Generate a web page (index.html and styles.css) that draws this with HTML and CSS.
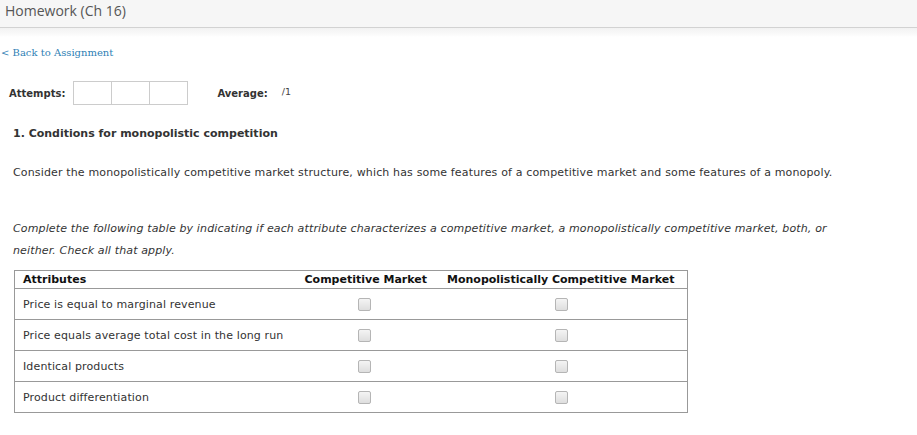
FILE: index.html
```html
<!DOCTYPE html>
<html>
<head>
<meta charset="utf-8">
<link rel="stylesheet" href="styles.css">
</head>
<body>
<header class="topbar">Homework (Ch 16)</header>
<div class="shadowband"></div>
<a class="back" href="#">&lt; Back to Assignment</a>
<div class="attempts">
  <span class="lbl">Attempts:</span>
  <span class="boxes"><span class="box"></span><span class="box"></span><span class="box"></span></span>
  <span class="lbl avg">Average:</span>
  <span class="score">/1</span>
</div>
<h2 class="qtitle">1. Conditions for monopolistic competition</h2>
<p class="intro">Consider the monopolistically competitive market structure, which has some features of a competitive market and some features of a monopoly.</p>
<p class="instr">Complete the following table by indicating if each attribute characterizes a competitive market, a monopolistically competitive market, both, or neither. Check all that apply.</p>
<table class="grid">
  <thead>
    <tr><th class="attr">Attributes</th><th class="c1">Competitive Market</th><th class="c2">Monopolistically Competitive Market</th></tr>
  </thead>
  <tbody>
    <tr><td>Price is equal to marginal revenue</td><td class="cb"><span class="chk"></span></td><td class="cb"><span class="chk"></span></td></tr>
    <tr><td>Price equals average total cost in the long run</td><td class="cb"><span class="chk"></span></td><td class="cb"><span class="chk"></span></td></tr>
    <tr><td>Identical products</td><td class="cb"><span class="chk"></span></td><td class="cb"><span class="chk"></span></td></tr>
    <tr><td>Product differentiation</td><td class="cb"><span class="chk"></span></td><td class="cb"><span class="chk"></span></td></tr>
  </tbody>
</table>
</body>
</html>
```
FILE: styles.css
```css
html, body { margin: 0; padding: 0; background: #fff; }
body { font-family: "DejaVu Sans", Verdana, sans-serif; font-size: 11px; color: #333; }
.topbar {
  height: 28px; box-sizing: border-box; background: #f6f6f6;
  border-bottom: 1px solid #d2d2d2;
  font-family: "Open Sans", sans-serif; font-size: 14px; color: #555;
  padding: 1px 0 0 5px; line-height: 20px;
}
.shadowband { height: 9px; background: linear-gradient(#f2f2f2, #fafafa 70%, #fff); }
.back {
  display: block; margin: 9px 0 0 1px; font-family: "DejaVu Serif", serif; font-size: 10px;
  color: #2f7fb5; text-decoration: none; line-height: 14px;
}
.attempts { display: flex; align-items: center; margin: 21px 0 0 9px; height: 24px; font-size: 10px; }
.lbl { font-weight: bold; color: #333; }
.boxes { display: flex; margin-left: 8px; }
.box { width: 37px; height: 22px; border: 1px solid #ccc; }
.box + .box { margin-left: -1px; }
.avg { margin-left: 29px; }
.score { margin-left: 14px; font-size: 9.5px; color: #444; margin-top: -3px; }
.qtitle { margin: 22px 0 0 13px; font-size: 11px; font-weight: bold; color: #333; line-height: 14px; }
.intro { margin: 25px 0 0 13px; line-height: 14px; letter-spacing: 0.15px; }
.instr { margin: 38px 0 0 13px; font-style: italic; line-height: 22px; width: 850px; letter-spacing: 0.14px; }
.grid { margin: 8px 0 0 14px; border-collapse: collapse; border: 1px solid #999; width: 674px; }
.grid th { font-weight: bold; color: #111; text-align: left; height: 17px; padding: 0 0 0 8px; border-bottom: 1px solid #999; }
.grid th.c1 { width: 134px; text-align: right; padding: 0 8px 0 0; }
.grid th.c2 { width: 230px; padding: 0 10px 0 12px; text-align: left; }
.grid td { height: 30px; padding: 0 0 0 8px; border-bottom: 1px solid #999; color: #333; letter-spacing: 0.13px; }
.grid td.cb { text-align: center; padding: 0; }
.chk {
  display: inline-block; width: 11px; height: 11px; border: 1px solid #b5b5b5; border-radius: 2px;
  background: linear-gradient(#f4f4f4, #dedede); vertical-align: middle;
}
```
